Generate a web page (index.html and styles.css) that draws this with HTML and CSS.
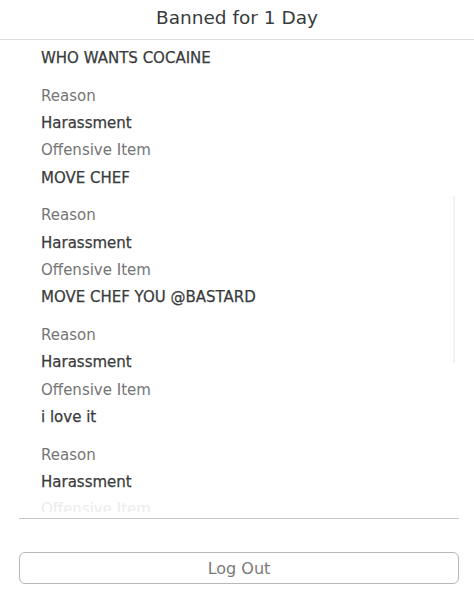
FILE: index.html
```html
<!DOCTYPE html>
<html>
<head>
<meta charset="utf-8">
<link rel="stylesheet" href="styles.css">
</head>
<body>
<div class="modal">
  <div class="header">Banned for 1 Day</div>
  <div class="scroll">
    <div class="list">
      <div class="group">
        <div class="line value">WHO WANTS COCAINE</div>
      </div>
      <div class="group">
        <div class="line label">Reason</div>
        <div class="line value">Harassment</div>
        <div class="line label">Offensive Item</div>
        <div class="line value">MOVE CHEF</div>
      </div>
      <div class="group">
        <div class="line label">Reason</div>
        <div class="line value">Harassment</div>
        <div class="line label">Offensive Item</div>
        <div class="line value">MOVE CHEF YOU @BASTARD</div>
      </div>
      <div class="group">
        <div class="line label">Reason</div>
        <div class="line value">Harassment</div>
        <div class="line label">Offensive Item</div>
        <div class="line value">i love it</div>
      </div>
      <div class="group">
        <div class="line label">Reason</div>
        <div class="line value">Harassment</div>
        <div class="line label fade">Offensive Item</div>
      </div>
    </div>
    <div class="scrollbar"></div>
  </div>
  <div class="divider"></div>
  <div class="footer">
    <button class="btn">Log Out</button>
  </div>
</div>
</body>
</html>
```
FILE: styles.css
```css
* { box-sizing: border-box; }
html, body { margin: 0; padding: 0; background: #fff; }
body {
  font-family: "DejaVu Sans", "Lato", sans-serif;
  color: #393b3d;
  width: 474px;
  height: 597px;
  overflow: hidden;
}
.header {
  height: 40px;
  border-bottom: 1px solid #dedede;
  text-align: center;
  font-size: 18.5px;
  line-height: 36px;
  color: #393b3d;
}
.scroll {
  position: relative;
  height: 472px;
  overflow: hidden;
}
.list {
  padding: 5px 0 0 41px;
}
.group { margin-bottom: 10.5px; }
.line {
  height: 27.3px;
  line-height: 27.3px;
  font-size: 15px;
  white-space: nowrap;
}
.label { color: #757575; }
.value {
  color: #393b3d;
  -webkit-text-stroke: 0.25px #393b3d;
}
.fade { color: #ececec; }
.scrollbar {
  position: absolute;
  right: 19px;
  top: 156px;
  width: 2px;
  height: 167px;
  background: #f2f2f2;
}
.divider {
  margin: 6px 15px 0 19px;
  height: 1px;
  background: #c8c8c8;
}
.footer {
  padding: 33px 15px 0 19px;
}
.btn {
  display: block;
  width: 100%;
  height: 32px;
  border: 1px solid #b8b8b8;
  border-radius: 6px;
  background: #fff;
  font-family: inherit;
  font-size: 16px;
  color: #7a7a7a;
  padding: 0;
}
```
